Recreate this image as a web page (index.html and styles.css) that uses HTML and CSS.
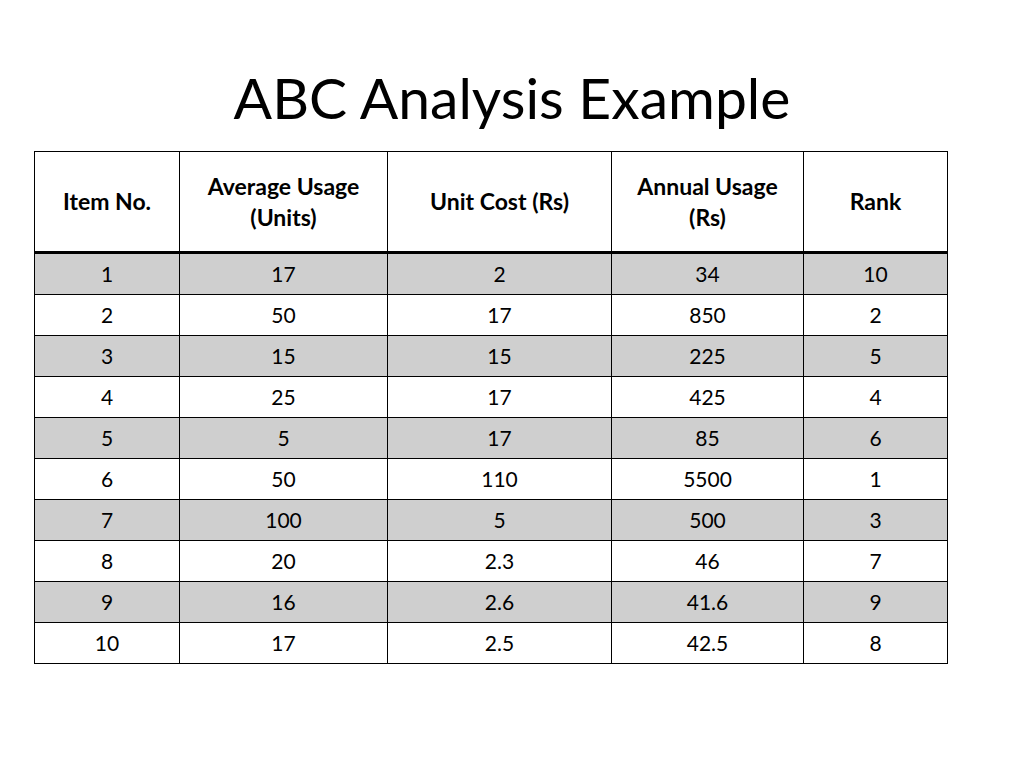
FILE: index.html
```html
<!DOCTYPE html>
<html>
<head>
<meta charset="utf-8">
<link rel="stylesheet" href="styles.css">
</head>
<body>
<div class="slide">
  <h1 class="title">ABC Analysis Example</h1>
  <table class="abc">
    <colgroup>
      <col class="c1"><col class="c2"><col class="c3"><col class="c4"><col class="c5">
    </colgroup>
    <thead>
      <tr>
        <th>Item No.</th>
        <th>Average Usage<br>(Units)</th>
        <th>Unit Cost (Rs)</th>
        <th>Annual Usage<br>(Rs)</th>
        <th>Rank</th>
      </tr>
    </thead>
    <tbody>
      <tr class="alt"><td>1</td><td>17</td><td>2</td><td>34</td><td>10</td></tr>
      <tr><td>2</td><td>50</td><td>17</td><td>850</td><td>2</td></tr>
      <tr class="alt"><td>3</td><td>15</td><td>15</td><td>225</td><td>5</td></tr>
      <tr><td>4</td><td>25</td><td>17</td><td>425</td><td>4</td></tr>
      <tr class="alt"><td>5</td><td>5</td><td>17</td><td>85</td><td>6</td></tr>
      <tr><td>6</td><td>50</td><td>110</td><td>5500</td><td>1</td></tr>
      <tr class="alt"><td>7</td><td>100</td><td>5</td><td>500</td><td>3</td></tr>
      <tr><td>8</td><td>20</td><td>2.3</td><td>46</td><td>7</td></tr>
      <tr class="alt"><td>9</td><td>16</td><td>2.6</td><td>41.6</td><td>9</td></tr>
      <tr><td>10</td><td>17</td><td>2.5</td><td>42.5</td><td>8</td></tr>
    </tbody>
  </table>
</div>
</body>
</html>
```
FILE: styles.css
```css
html, body {
  margin: 0;
  padding: 0;
  background: #ffffff;
}
.slide {
  width: 1024px;
  height: 768px;
  box-sizing: border-box;
  padding-top: 62px;
  font-family: "Lato", "Open Sans", sans-serif;
  color: #000;
}
.title {
  margin: 0;
  height: 89px;
  text-align: center;
  font-weight: normal;
  font-size: 57px;
  line-height: 70px;
}
.abc {
  margin-left: 34px;
  width: 913px;
  border-collapse: collapse;
  table-layout: fixed;
}
.c1 { width: 145px; }
.c2 { width: 208px; }
.c3 { width: 224px; }
.c4 { width: 192px; }
.c5 { width: 144px; }
.abc th, .abc td {
  border: 1px solid #000;
  text-align: center;
  padding: 0;
}
.abc th {
  height: 99px;
  font-size: 23px;
  font-weight: bold;
  line-height: 31px;
  border-bottom: 3px solid #000;
}
.abc td {
  height: 40px;
  font-size: 21px;
  line-height: 24px;
}
.abc tr.alt td {
  background: #cfcfcf;
}
```
